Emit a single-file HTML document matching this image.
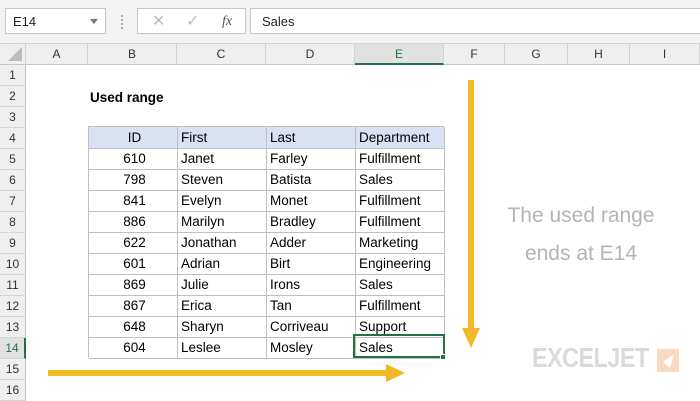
<!DOCTYPE html><html><head><style>
body{margin:0;width:700px;height:400px;overflow:hidden;background:#fff;font-family:"Liberation Sans",Calibri,sans-serif;position:relative}
.a{position:absolute;box-sizing:border-box}
.top{left:0;top:0;width:700px;height:44px;background:#f3f3f3;border-bottom:1px solid #d4d4d4}
.box{background:#fff;border:1px solid #c6c6c6;font-size:13px;color:#222;line-height:26px}
.ch{top:44px;height:21px;background:#efefef;border-right:1px solid #d4d4d4;border-bottom:1px solid #c6c6c6;font-size:12px;color:#333;text-align:center;line-height:21px}
.rh{left:0;width:26px;height:21px;background:#efefef;border-bottom:1px solid #d4d4d4;border-right:1px solid #c6c6c6;font-size:12px;color:#333;text-align:center;line-height:21px}
.c{height:21px;border-right:1px solid #c0c0c0;border-bottom:1px solid #c0c0c0;font-size:13.5px;line-height:21px;padding-left:3px;color:#000;white-space:nowrap}
</style></head><body>
<div class="a top"></div>
<div class="a box" style="left:5px;top:8px;width:101px;height:26px;padding-left:7px">E14<span style="position:absolute;right:7px;top:10px;border:4px solid transparent;border-top:5px solid #777"></span></div>
<div class="a" style="left:121px;top:15px;width:2px;height:14px;border-left:2px dotted #aaa"></div>
<div class="a box" style="left:137px;top:8px;width:109px;height:26px;color:#bbb;font-size:16px"><span style="position:absolute;left:14px">✕</span><span style="position:absolute;left:48px">✓</span><span style="position:absolute;left:84px;color:#555;font-style:italic;font-family:'Liberation Serif';font-size:14px">fx</span></div>
<div class="a box" style="left:250px;top:8px;width:460px;height:26px;padding-left:11px">Sales</div>
<div class="a ch" style="left:0;width:26px"><span style="position:absolute;right:3px;bottom:3px;border:7px solid transparent;border-right-color:#bbb;border-bottom-color:#bbb"></span></div>
<div class="a ch" style="left:26px;width:62px">A</div>
<div class="a ch" style="left:88px;width:89px">B</div>
<div class="a ch" style="left:177px;width:89px">C</div>
<div class="a ch" style="left:266px;width:89px">D</div>
<div class="a ch" style="left:355px;width:89px;background:#e1e1e1;border-bottom:2px solid #217346;color:#217346">E</div>
<div class="a ch" style="left:444px;width:61px">F</div>
<div class="a ch" style="left:505px;width:63px">G</div>
<div class="a ch" style="left:568px;width:62px">H</div>
<div class="a ch" style="left:630px;width:70px">I</div>
<div class="a rh" style="top:65px">1</div><div class="a rh" style="top:86px">2</div><div class="a rh" style="top:107px">3</div><div class="a rh" style="top:128px">4</div><div class="a rh" style="top:149px">5</div><div class="a rh" style="top:170px">6</div><div class="a rh" style="top:191px">7</div><div class="a rh" style="top:212px">8</div><div class="a rh" style="top:233px">9</div><div class="a rh" style="top:254px">10</div><div class="a rh" style="top:275px">11</div><div class="a rh" style="top:296px">12</div><div class="a rh" style="top:317px">13</div><div class="a rh" style="top:338px;background:#e1e1e1;color:#217346;border-right:2px solid #217346">14</div><div class="a rh" style="top:359px">15</div><div class="a rh" style="top:380px">16</div>
<div class="a" style="left:90px;top:87px;font-weight:bold;font-size:13.5px;line-height:21px">Used range</div>
<div class="a" style="left:88px;top:126px;border-left:1px solid #c0c0c0;border-top:1px solid #c0c0c0;width:356px">
<div style="display:grid;grid-template-columns:89px 89px 89px 89px;grid-auto-rows:21px">
<div class="c" style="background:#d9e1f2;text-align:center">ID</div><div class="c" style="background:#d9e1f2">First</div><div class="c" style="background:#d9e1f2">Last</div><div class="c" style="background:#d9e1f2">Department</div>
<div class="c" style="text-align:center">610</div><div class="c">Janet</div><div class="c">Farley</div><div class="c">Fulfillment</div>
<div class="c" style="text-align:center">798</div><div class="c">Steven</div><div class="c">Batista</div><div class="c">Sales</div>
<div class="c" style="text-align:center">841</div><div class="c">Evelyn</div><div class="c">Monet</div><div class="c">Fulfillment</div>
<div class="c" style="text-align:center">886</div><div class="c">Marilyn</div><div class="c">Bradley</div><div class="c">Fulfillment</div>
<div class="c" style="text-align:center">622</div><div class="c">Jonathan</div><div class="c">Adder</div><div class="c">Marketing</div>
<div class="c" style="text-align:center">601</div><div class="c">Adrian</div><div class="c">Birt</div><div class="c">Engineering</div>
<div class="c" style="text-align:center">869</div><div class="c">Julie</div><div class="c">Irons</div><div class="c">Sales</div>
<div class="c" style="text-align:center">867</div><div class="c">Erica</div><div class="c">Tan</div><div class="c">Fulfillment</div>
<div class="c" style="text-align:center">648</div><div class="c">Sharyn</div><div class="c">Corriveau</div><div class="c">Support</div>
<div class="c" style="text-align:center">604</div><div class="c">Leslee</div><div class="c">Mosley</div><div class="c">Sales</div>
</div></div>
<div class="a" style="left:353px;top:334px;width:92px;height:24px;border:2px solid #217346"></div>
<div class="a" style="left:440px;top:354px;width:6px;height:6px;background:#217346;border:1px solid #fff"></div>
<div class="a" style="left:468px;top:80px;width:6px;height:250px;background:#f2b825"></div>
<div class="a" style="left:462px;top:328px;border-left:9px solid transparent;border-right:9px solid transparent;border-top:20px solid #f2b825"></div>
<div class="a" style="left:48px;top:370px;width:340px;height:6px;background:#f2b825"></div>
<div class="a" style="left:386px;top:364px;border-top:9px solid transparent;border-bottom:9px solid transparent;border-left:19px solid #f2b825"></div>
<div class="a" style="left:496px;top:197px;width:170px;text-align:center;font-size:21px;line-height:38px;color:#b4b4b4">The used range<br>ends at E14</div>
<div class="a" style="left:532px;top:343px;font-size:28px;font-weight:bold;color:#dadada;letter-spacing:-0.5px;line-height:30px;transform:scaleX(0.83);transform-origin:left">EXCELJET</div>
<div class="a" style="left:657px;top:349px;width:22px;height:23px;background:#fad9c3"><svg width="22" height="23"><path d="M6 13 L17 5 L13 19 Z" fill="#fff"/></svg></div>
</body></html>
